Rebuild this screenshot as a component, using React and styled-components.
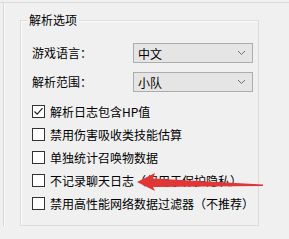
import React from "react";
import styled, { createGlobalStyle } from "styled-components";

const Global = createGlobalStyle`
  body {
    margin: 0;
    background: #f0f0f0;
    font-family: "Noto Sans CJK SC", "Noto Sans", sans-serif;
    font-size: 12px;
    color: #000;
  }
`;

const Screen = styled.div`
  position: relative;
  width: 289px;
  height: 239px;
  overflow: hidden;
  border-top: 1px solid #dadada;
  margin-top: 2px;
  box-sizing: border-box;
  display: flex;
`;

const SidePanel = styled.div`
  width: 3px;
  height: 223px;
  border-right: 1px solid #d6d6d6;
  box-shadow: 1px 0 0 #fafafa;
`;

const Group = styled.div`
  position: relative;
  margin: 17px 0 0 16px;
  width: 239px;
  height: 206px;
  box-sizing: border-box;
  border: 1px solid #dcdcdc;
  box-shadow: inset 1px 1px 0 #fbfbfb;
  padding: 22px 0 0 11px;
`;

const GroupTitle = styled.div`
  position: absolute;
  top: -10px;
  left: 6px;
  padding: 0 2px;
  background: #f0f0f0;
  line-height: 18px;
`;

const FieldRow = styled.div`
  display: flex;
  align-items: center;
  height: 20px;
  margin-bottom: 9px;
`;

const Label = styled.div`
  width: 101px;
  line-height: 20px;
`;

const Select = styled.div`
  width: 120px;
  height: 20px;
  box-sizing: border-box;
  border: 1px solid #adadad;
  background: #e5e5e5;
  display: flex;
  align-items: center;
  justify-content: space-between;
  padding: 0 6px 0 4px;
`;

const CheckList = styled.div`
  margin-top: -1px;
`;

const CheckRow = styled.div`
  display: flex;
  align-items: center;
  height: 23px;
  white-space: nowrap;
`;

const Box = styled.div`
  width: 13px;
  height: 13px;
  box-sizing: border-box;
  border: 1px solid #333;
  background: #fff;
  margin-right: 5px;
  display: flex;
  align-items: center;
  justify-content: center;
`;

const Arrow = styled.svg`
  position: absolute;
  left: 136px;
  top: 168px;
`;

const Chevron = () => (
  <svg width="9" height="6" viewBox="0 0 9 6">
    <path d="M1 1 L4.5 4.5 L8 1" fill="none" stroke="#707070" strokeWidth="1" />
  </svg>
);

const Check = () => (
  <svg width="11" height="11" viewBox="0 0 11 11">
    <path d="M1.5 5.5 L4.2 8.2 L9.5 2.2" fill="none" stroke="#222" strokeWidth="1.2" />
  </svg>
);

const options = [
  { text: "解析日志包含HP值", checked: true },
  { text: "禁用伤害吸收类技能估算" },
  { text: "单独统计召唤物数据" },
  { text: "不记录聊天日志（仅用于保护隐私）" },
  { text: "禁用高性能网络数据过滤器（不推荐）" },
];

export default function App() {
  return (
    <>
      <Global />
      <Screen>
        <SidePanel />
        <Group>
          <GroupTitle>解析选项</GroupTitle>
          <FieldRow>
            <Label>游戏语言：</Label>
            <Select>
              <span>中文</span>
              <Chevron />
            </Select>
          </FieldRow>
          <FieldRow>
            <Label>解析范围：</Label>
            <Select>
              <span>小队</span>
              <Chevron />
            </Select>
          </FieldRow>
          <CheckList>
            {options.map((o) => (
              <CheckRow key={o.text}>
                <Box>{o.checked && <Check />}</Box>
                {o.text}
              </CheckRow>
            ))}
          </CheckList>
        </Group>
        <Arrow width="132" height="24" viewBox="0 0 132 24">
          <polygon
            points="1,11 19,2 17,7.5 127,13.5 127,15 17,16 19,20"
            fill="#e03636"
          />
        </Arrow>
      </Screen>
    </>
  );
}
